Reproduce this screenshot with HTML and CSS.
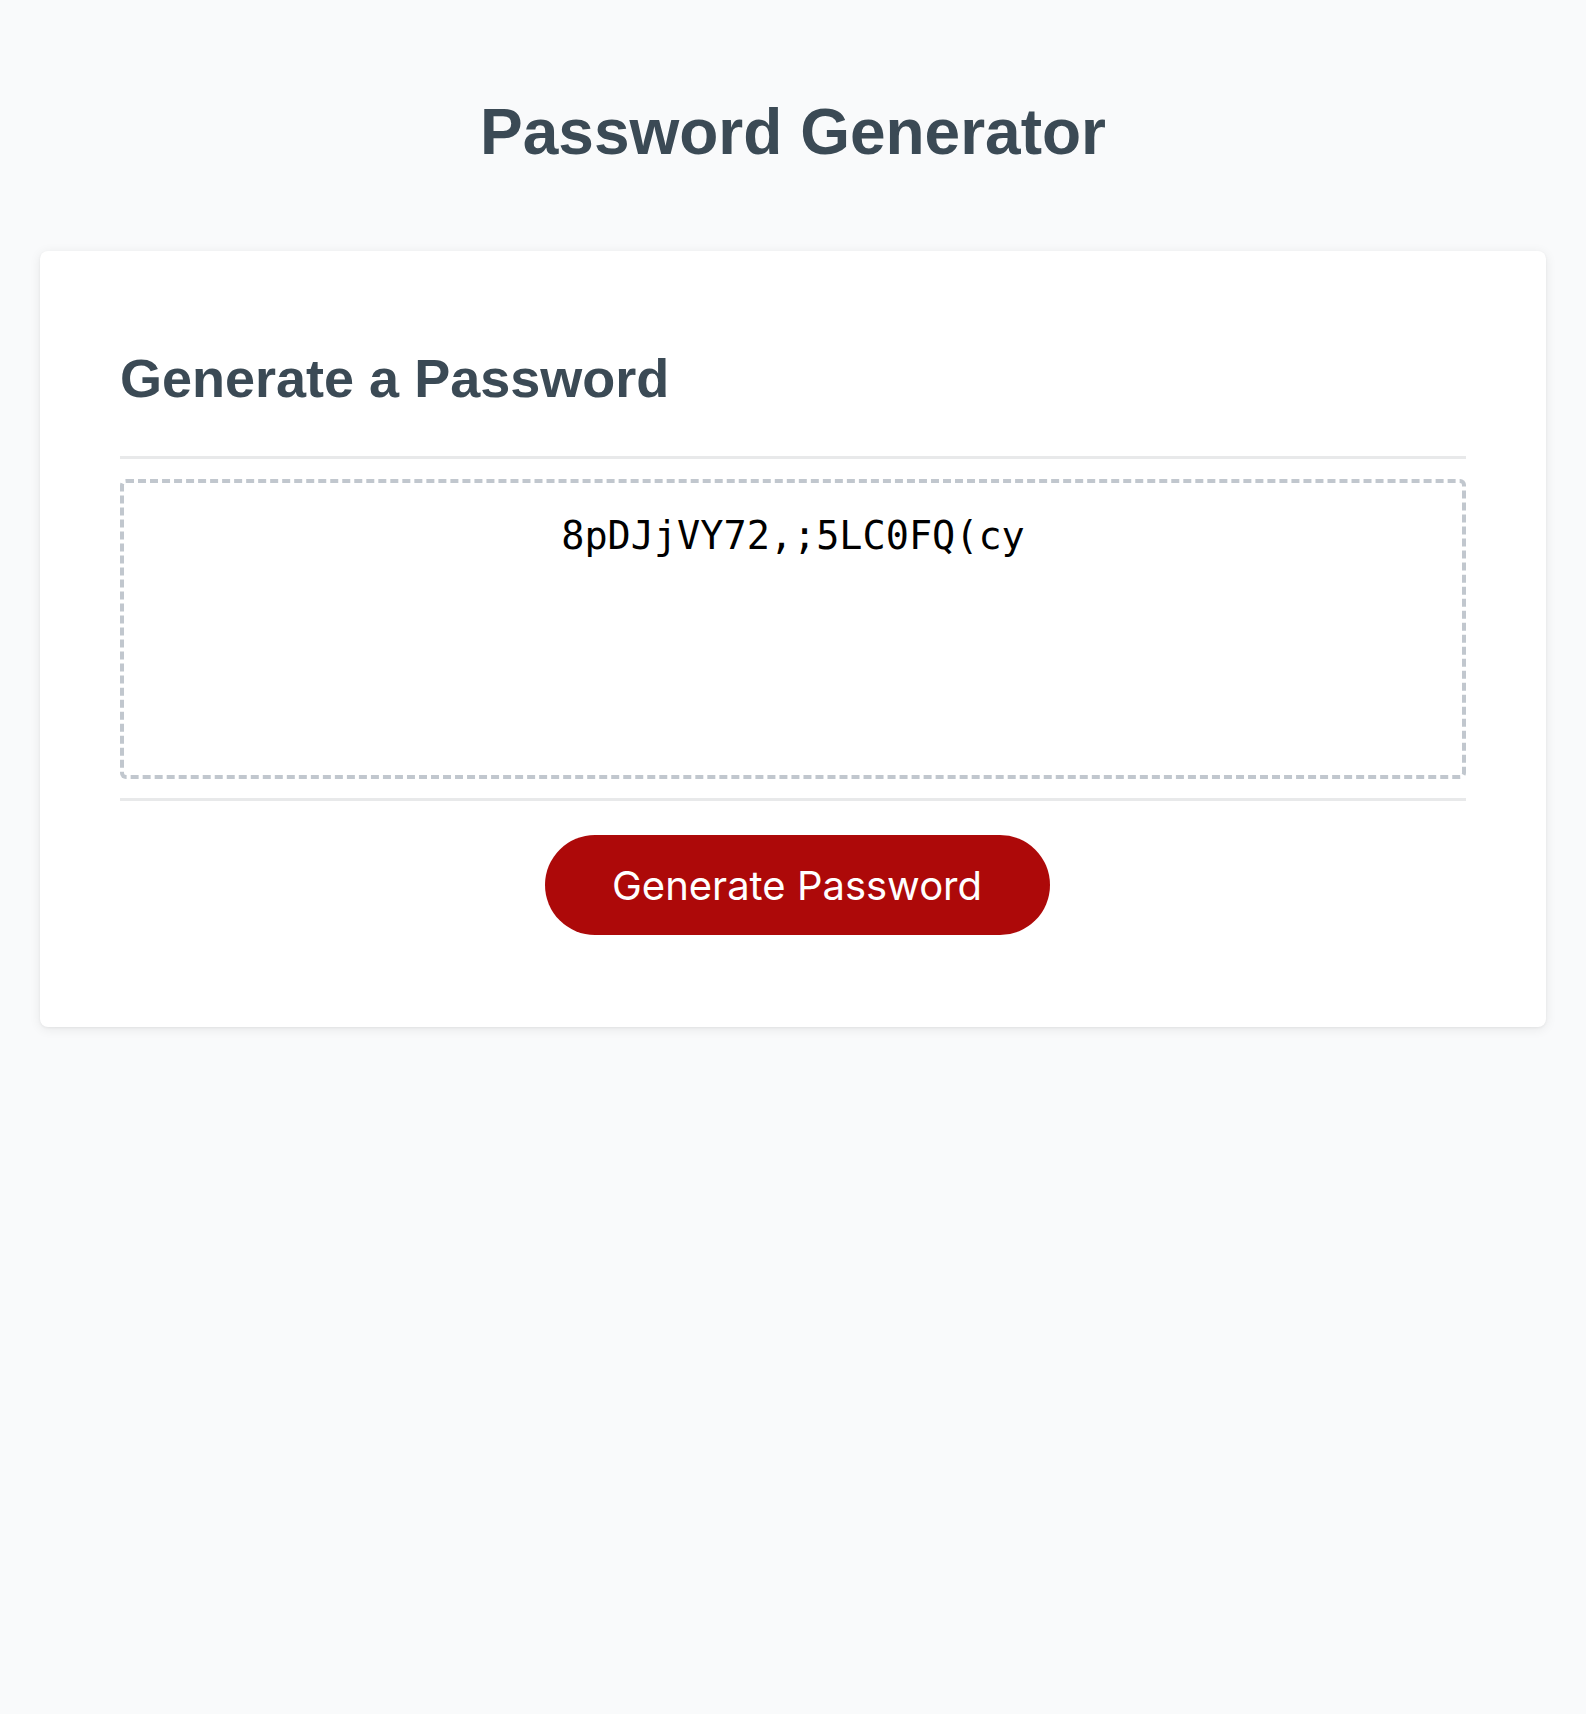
FILE: index.html
```html
<!DOCTYPE html>
<html lang="en">
<head>
<meta charset="utf-8">
<title>Password Generator</title>
<link rel="stylesheet" href="styles.css">
</head>
<body>
<div class="wrapper">
  <header class="page-header">
    <h1>Password Generator</h1>
  </header>
  <div class="card">
    <div class="card-header">
      <h2>Generate a Password</h2>
    </div>
    <div class="card-body">
      <textarea readonly id="password" aria-label="Generated Password">8pDJjVY72,;5LC0FQ(cy</textarea>
    </div>
    <div class="card-footer">
      <button id="generate" class="btn">Generate Password</button>
    </div>
  </div>
</div>
</body>
</html>
```

FILE: styles.css
```css
* { box-sizing: border-box; }

html, body {
  margin: 0;
  padding: 0;
  height: 100%;
}

body {
  background: #f9fafb;
  font-family: "Liberation Sans", Arial, sans-serif;
  color: #3b4a55;
}

.wrapper {
  padding: 0 40px;
}

.page-header {
  padding-top: 84px;
  text-align: center;
}

.page-header h1 {
  margin: 0;
  font-size: 64px;
  line-height: 96px;
  font-weight: 700;
  color: #3b4a55;
}

.card {
  margin-top: 71px;
  background: #ffffff;
  border-radius: 8px;
  box-shadow: 0 2px 12px rgba(0, 0, 0, 0.08), 0 1px 3px rgba(0, 0, 0, 0.05);
  padding: 97px 80px 92px;
}

.card-header {
  border-bottom: 3px solid #e8e9ea;
  padding-bottom: 48px;
}

.card-header h2 {
  margin: 0;
  font-size: 54px;
  line-height: 60px;
  font-weight: 700;
  color: #3b4a55;
}

.card-body {
  padding: 20px 0 19px;
  border-bottom: 3px solid #e8e9ea;
}

.card-body textarea {
  display: block;
  width: 100%;
  height: 300px;
  border: 4px dashed #c1c7ce;
  border-radius: 6px;
  resize: none;
  padding: 31px 20px;
  font-family: "DejaVu Sans Mono", monospace;
  font-size: 38.5px;
  line-height: 44px;
  text-align: center;
  color: #000;
  background: #fff;
  outline: none;
}

.card-footer {
  display: flex;
  justify-content: center;
  padding-top: 34px;
}

.btn {
  width: 505px;
  height: 100px;
  margin-left: 8px;
  border: none;
  border-radius: 50px;
  background: #ad0909;
  color: #fff;
  font-family: Inter, "Noto Sans", sans-serif;
  font-size: 40px;
  cursor: pointer;
}
```
